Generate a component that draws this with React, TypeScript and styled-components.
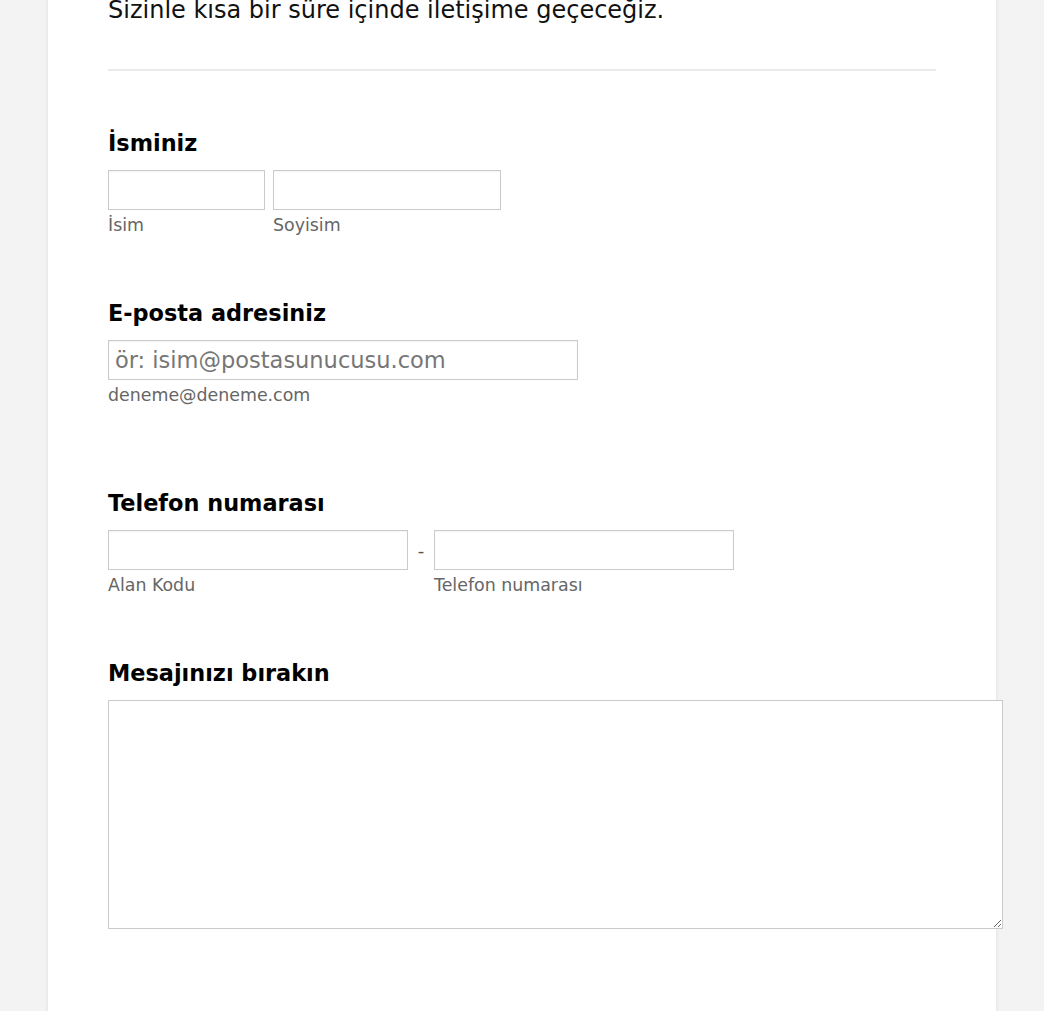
import React from "react";
import styled, { createGlobalStyle } from "styled-components";

const Global = createGlobalStyle`
  html, body {
    margin: 0;
    padding: 0;
    background: #f3f3f3;
    overflow: hidden;
  }
  * { box-sizing: border-box; }
`;

const Page = styled.div`
  height: 1011px;
  overflow: hidden;
  font-family: "DejaVu Sans", Verdana, sans-serif;
`;

const Card = styled.main`
  margin-left: 48px;
  width: 948px;
  min-height: 1100px;
  background: #ffffff;
  box-shadow: 0 0 4px rgba(0, 0, 0, 0.09);
  padding: 0 60px;
`;

const Intro = styled.p`
  margin: -5px 0 0;
  font-size: 24px;
  line-height: 30px;
  color: #111;
`;

const Divider = styled.hr`
  margin: 44px 0 0;
  border: 0;
  height: 2px;
  background: #ebebeb;
`;

const Field = styled.section<{ $top: number }>`
  margin-top: ${(p) => p.$top}px;
`;

const Label = styled.label`
  display: block;
  font-size: 22.4px;
  line-height: 28px;
  font-weight: bold;
  color: #000;
  margin-bottom: 13px;
`;

const Row = styled.div`
  display: flex;
  align-items: flex-start;
`;

const Group = styled.div<{ $w: number }>`
  width: ${(p) => p.$w}px;
  display: flex;
  flex-direction: column;
`;

const Input = styled.input`
  width: 100%;
  height: 40px;
  border: 1px solid #cacaca;
  box-shadow: inset 0 1px 1px rgba(0, 0, 0, 0.04);
  background: #fff;
  padding: 0 6px;
  font-family: inherit;
  font-size: 22.5px;
  color: #222;
  outline: none;
  &::placeholder {
    color: #767676;
  }
`;

const Sub = styled.span`
  margin-top: 4px;
  font-size: 17.4px;
  line-height: 22px;
  color: #666;
  white-space: nowrap;
`;

const Dash = styled.span`
  width: 26px;
  height: 40px;
  display: flex;
  align-items: center;
  justify-content: center;
  font-size: 18px;
  color: #555;
`;

const Gap = styled.div`
  width: 8px;
`;

const Message = styled.textarea`
  display: block;
  width: 895px;
  height: 229px;
  border: 1px solid #cacaca;
  background: #fff;
  font-family: inherit;
  font-size: 18px;
  outline: none;
  resize: both;
`;

export default function App() {
  return (
    <Page>
      <Global />
      <Card>
        <Intro>Sizinle kısa bir süre içinde iletişime geçeceğiz.</Intro>
        <Divider />

        <Field $top={58}>
          <Label>İsminiz</Label>
          <Row>
            <Group $w={157}>
              <Input />
              <Sub>İsim</Sub>
            </Group>
            <Gap />
            <Group $w={228}>
              <Input />
              <Sub>Soyisim</Sub>
            </Group>
          </Row>
        </Field>

        <Field $top={63}>
          <Label>E-posta adresiniz</Label>
          <Group $w={470}>
            <Input placeholder="ör: isim@postasunucusu.com" />
            <Sub>deneme@deneme.com</Sub>
          </Group>
        </Field>

        <Field $top={83}>
          <Label>Telefon numarası</Label>
          <Row>
            <Group $w={300}>
              <Input />
              <Sub>Alan Kodu</Sub>
            </Group>
            <Dash>-</Dash>
            <Group $w={300}>
              <Input />
              <Sub>Telefon numarası</Sub>
            </Group>
          </Row>
        </Field>

        <Field $top={63}>
          <Label>Mesajınızı bırakın</Label>
          <Message />
        </Field>
      </Card>
    </Page>
  );
}
